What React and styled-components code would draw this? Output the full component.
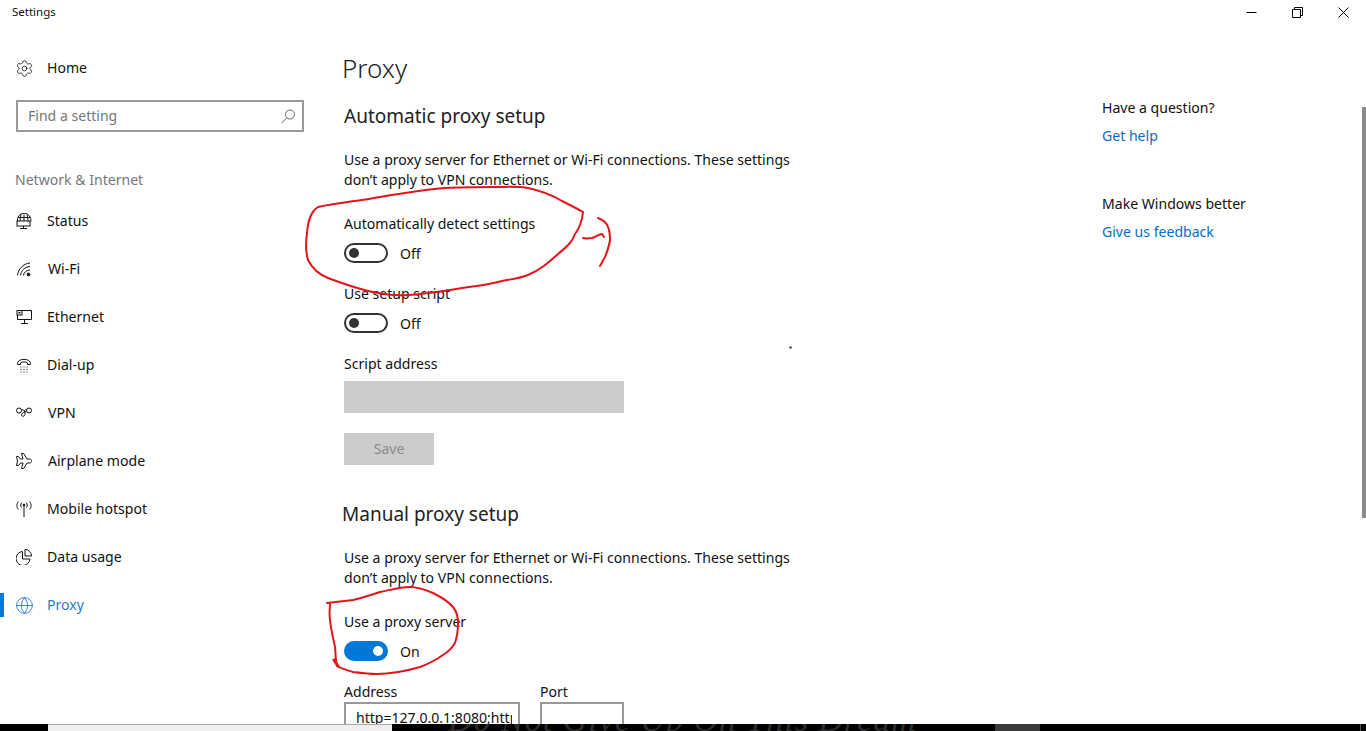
import React from "react";
import styled, { createGlobalStyle } from "styled-components";
import { Settings, Globe } from "lucide-react";

const GlobalStyle = createGlobalStyle`
  html, body {
    margin: 0;
    padding: 0;
    background: #fff;
    overflow: hidden;
  }
  * { box-sizing: border-box; }
`;

const Page = styled.div`
  position: relative;
  width: 1366px;
  height: 731px;
  display: flex;
  flex-direction: column;
  overflow: hidden;
  background: #fff;
  color: #111;
  font-family: "Noto Sans", "Open Sans", sans-serif;
  font-size: 14.07px;
  line-height: 20px;
`;

const TitleBar = styled.div`
  height: 24px;
  flex: none;
  display: flex;
  align-items: center;
  justify-content: space-between;
  padding-left: 12px;
  font-size: 11.5px;
`;

const WindowButtons = styled.div`
  display: flex;
`;

const WindowButton = styled.div`
  width: 46px;
  height: 24px;
  display: flex;
  align-items: center;
  justify-content: center;
`;

const Body = styled.div`
  flex: 1;
  min-height: 0;
  display: flex;
  overflow: hidden;
`;

const Sidebar = styled.nav`
  width: 320px;
  flex: none;
  padding-top: 20px;
`;

const NavRow = styled.div`
  position: relative;
  height: 48px;
  display: flex;
  align-items: center;
  gap: ${(p) => (p.$wide ? 16 : 15)}px;
  padding-left: 16px;
  color: ${(p) => (p.$active ? "#2b7cc4" : "#111")};
  &::before {
    content: "";
    display: ${(p) => (p.$active ? "block" : "none")};
    position: absolute;
    left: 0;
    top: 12px;
    width: 4px;
    height: 24px;
    background: #0078d7;
  }
`;

const IconBox = styled.span`
  width: 16px;
  height: 16px;
  flex: none;
  display: flex;
  align-items: center;
  justify-content: center;
`;

const SearchBox = styled.div`
  width: 288px;
  height: 32px;
  margin: 8px 0 0 16px;
  padding: 0 6px 0 10px;
  display: flex;
  align-items: center;
  justify-content: space-between;
  border: 2px solid #999;
  color: #777;
`;

const GroupLabel = styled.div`
  margin: 38px 0 7px 15px;
  color: #777;
`;

const Main = styled.main`
  flex: 1;
  padding: 24px 0 0 24px;
`;

const PageTitle = styled.h1`
  margin: 0 0 0 -2px;
  font-size: 26px;
  font-weight: 300;
  line-height: 40px;
  color: #222;
`;

const SectionTitle = styled.h2`
  margin: ${(p) => p.$top}px 0 0 ${(p) => p.$left || 0}px;
  font-size: 19px;
  font-weight: 400;
  line-height: 28px;
  color: #222;
`;

const Paragraph = styled.p`
  margin: 20px 0 0;
  width: 470px;
`;

const FieldLabel = styled.div`
  margin-top: ${(p) => p.$top}px;
`;

const ToggleRow = styled.div`
  margin-top: 9px;
  height: 20px;
  display: flex;
  align-items: center;
  gap: 12px;
`;

const ToggleText = styled.span`
  padding-top: 1px;
`;

const Toggle = styled.span`
  width: 44px;
  height: 20px;
  display: flex;
  align-items: center;
  justify-content: ${(p) => (p.$on ? "flex-end" : "flex-start")};
  padding: 0 3px;
  border-radius: 10px;
  border: 2px solid ${(p) => (p.$on ? "#0078d7" : "#333")};
  background: ${(p) => (p.$on ? "#0078d7" : "#fff")};
  &::after {
    content: "";
    width: 10px;
    height: 10px;
    border-radius: 50%;
    background: ${(p) => (p.$on ? "#fff" : "#333")};
  }
`;

const DisabledInput = styled.div`
  width: 280px;
  height: 32px;
  margin-top: 7px;
  background: #ccc;
`;

const DisabledButton = styled.div`
  width: 90px;
  height: 32px;
  margin-top: 20px;
  display: flex;
  align-items: center;
  justify-content: center;
  background: #ccc;
  color: #8a8a8a;
`;

const AddressRow = styled.div`
  display: flex;
  gap: 20px;
  margin-top: 21px;
`;

const AddressField = styled.div`
  width: ${(p) => p.$width}px;
  flex: none;
`;

const TextBox = styled.input`
  display: block;
  width: 100%;
  height: 32px;
  padding: 0 6px 2px 10px;
  border: 2px solid #999;
  border-radius: 0;
  outline: none;
  background: #fff;
  color: #111;
  font: inherit;
`;

const Aside = styled.aside`
  width: 264px;
  flex: none;
  padding-top: 74px;
`;

const AsideText = styled.div`
  margin-top: ${(p) => p.$top || 0}px;
`;

const AsideLink = styled.a`
  display: block;
  margin-top: 8px;
  color: #0b6cbd;
`;

const ScrollThumb = styled.div`
  position: absolute;
  right: 0;
  top: 107px;
  width: 4px;
  height: 411px;
  background: #8a8a8a;
`;

const Taskbar = styled.div`
  height: 7px;
  flex: none;
  display: flex;
  background: #000;
  overflow: hidden;
`;

const TaskbarStart = styled.div`
  width: 48px;
  flex: none;
`;

const TaskbarSearch = styled.div`
  width: 344px;
  flex: none;
  background: #f0f0f0;
  border-top: 1px solid #aaa;
`;

const TaskbarWallpaper = styled.div`
  width: 603px;
  flex: none;
  padding-left: 56px;
  color: #2c2c2c;
  font-family: "Liberation Serif", serif;
  font-style: italic;
  font-size: 34px;
  line-height: 30px;
  letter-spacing: 1px;
  white-space: nowrap;
  overflow: hidden;
  & > span {
    display: block;
    margin-top: -19px;
  }
`;

const TaskbarActive = styled.div`
  width: 45px;
  flex: none;
  background: #3a3a3a;
`;

const TaskbarClock = styled.div`
  margin-left: 225px;
  width: 96px;
  flex: none;
  border-right: 1px solid #555;
  color: #fff;
  font-size: 11.5px;
  line-height: 16px;
  & > span {
    display: block;
    margin-top: 4px;
  }
`;

const Annotations = styled.svg`
  position: absolute;
  left: 0;
  top: 0;
  width: 1366px;
  height: 731px;
  pointer-events: none;
`;

const line = { fill: "none", stroke: "#111", strokeWidth: 1 };

const StatusIcon = () => (
  <svg width="16" height="16" viewBox="0 0 16 16" {...line}>
    <path d="M1.500 8.500A6.800 6.800 0 1 1 14.800 8.500" />
    <path d="M2 4.500h12M8 1.500v7M5 2c-.8 2-1 4-1 6.500M11 2c.8 2 1 4 1 6.500" />
    <rect x="1" y="8" width="13" height="5" fill="#fff" />
    <path d="M7.500 13v2M4 15.500h7" />
  </svg>
);

const WifiIcon = () => (
  <svg width="16" height="16" viewBox="0 0 16 16" {...line}>
    <path d="M1.500 14.500C2 8.500 7 2.500 14 2" />
    <path d="M4.500 14.500c.4-4.500 4-8.500 9.500-9" />
    <path d="M7.500 14.500c.3-3 2.600-5.200 6.500-5.500" />
    <circle cx="12.500" cy="13.500" r="1.400" fill="#111" />
  </svg>
);

const EthernetIcon = () => (
  <svg width="16" height="16" viewBox="0 0 16 16" {...line}>
    <path d="M5.500 1.500h10v9h-14V6" />
    <rect x="1" y="1.500" width="5" height="4.500" />
    <rect x="2.500" y="3" width="2" height="1.500" fill="#111" stroke="none" />
    <path d="M8.500 10.500v4M5 14.500h7" />
  </svg>
);

const DialIcon = () => (
  <svg width="16" height="16" viewBox="0 0 16 16" {...line}>
    <path d="M1.500 6.500C1.500 1 14.500 1 14.500 6.500v1h-3V6C10 4.500 6 4.500 4.500 6v1.500h-3z" />
    <path d="M4.500 10h1M7.500 10h1M10.500 10h1M4.500 12.500h1M7.500 12.500h1M10.500 12.500h1M4.500 15h1M7.500 15h1M10.500 15h1" />
  </svg>
);

const VpnIcon = () => (
  <svg width="16" height="16" viewBox="0 0 16 16" {...line}>
    <circle cx="3" cy="5.500" r="2.500" />
    <circle cx="13" cy="5.500" r="2.500" />
    <path d="M5.300 4.500C8 4.500 9.500 7 9 9.500c-.4 2-3.500 2.500-3.500.5S8.500 7 10.800 6.500" />
    <path d="M10.700 4.500C9.500 4.500 8.800 5 8.300 5.800" />
  </svg>
);

const PlaneIcon = () => (
  <svg width="16" height="16" viewBox="0 0 16 16" {...line}>
    <path d="M.5 3.500h2L4.500 6H7L5.500.5h2.200L11 6h2.500c1.500 0 2.300 1.200 2.300 2s-.8 2-2.300 2H11l-3.300 5.500H5.500L7 10H4.500l-2 2.500h-2L1.500 8z" />
  </svg>
);

const HotspotIcon = () => (
  <svg width="16" height="16" viewBox="0 0 16 16" {...line}>
    <path d="M8 5v11" />
    <circle cx="8" cy="4" r=".9" fill="#111" />
    <path d="M5.500 1.500c-1 1.500-1 3.500 0 5M10.500 1.500c1 1.500 1 3.500 0 5M2.500.5c-2.200 2.500-2.200 5.500 0 8M13.500.5c2.200 2.500 2.200 5.500 0 8" />
  </svg>
);

const DataIcon = () => (
  <svg width="16" height="16" viewBox="0 0 16 16" {...line}>
    <path d="M6.500 2.500a7 7 0 1 0 7.500 7.500H6.500z" />
    <path d="M9 .5a6.500 6.500 0 0 1 6.500 6.500H9z" />
  </svg>
);

const MinimizeGlyph = () => (
  <svg width="11" height="11" viewBox="0 0 11 11" fill="none" stroke="#000">
    <path d="M.5 5.500h10" />
  </svg>
);

const RestoreGlyph = () => (
  <svg width="11" height="11" viewBox="0 0 11 11" fill="none" stroke="#000">
    <path d="M.5 2.500h8v8h-8zM2.500 2.500v-2h8v8h-2" />
  </svg>
);

const CloseGlyph = () => (
  <svg width="11" height="11" viewBox="0 0 11 11" fill="none" stroke="#000">
    <path d="M.5.500l10 10M10.500.500l-10 10" />
  </svg>
);

const SearchGlyph = () => (
  <svg width="15" height="15" viewBox="0 0 15 15" fill="none" stroke="#666">
    <circle cx="9" cy="5.500" r="4.500" />
    <path d="M5.800 8.700L.8 14" />
  </svg>
);

const navItems = [
  { label: "Status", icon: <StatusIcon /> },
  { label: "Wi-Fi", icon: <WifiIcon />, wide: true },
  { label: "Ethernet", icon: <EthernetIcon /> },
  { label: "Dial-up", icon: <DialIcon /> },
  { label: "VPN", icon: <VpnIcon />, wide: true },
  { label: "Airplane mode", icon: <PlaneIcon />, wide: true },
  { label: "Mobile hotspot", icon: <HotspotIcon /> },
  { label: "Data usage", icon: <DataIcon /> },
];

const proxyText = (
  <>
    Use a proxy server for Ethernet or Wi-Fi connections. These settings
    <br />
    don’t apply to VPN connections.
  </>
);

export default function App() {
  return (
    <Page>
      <GlobalStyle />
      <TitleBar>
        <span>Settings</span>
        <WindowButtons>
          <WindowButton>
            <MinimizeGlyph />
          </WindowButton>
          <WindowButton>
            <RestoreGlyph />
          </WindowButton>
          <WindowButton>
            <CloseGlyph />
          </WindowButton>
        </WindowButtons>
      </TitleBar>
      <Body>
        <Sidebar>
          <NavRow>
            <IconBox>
              <Settings size={19} strokeWidth={1} style={{ flex: "none" }} />
            </IconBox>
            Home
          </NavRow>
          <SearchBox>
            Find a setting
            <SearchGlyph />
          </SearchBox>
          <GroupLabel>Network &amp; Internet</GroupLabel>
          {navItems.map((item) => (
            <NavRow key={item.label} $wide={item.wide}>
              <IconBox>{item.icon}</IconBox>
              {item.label}
            </NavRow>
          ))}
          <NavRow $active>
            <IconBox>
              <Globe size={19} strokeWidth={1.100} color="#1f78c8" style={{ flex: "none" }} />
            </IconBox>
            Proxy
          </NavRow>
        </Sidebar>
        <Main>
          <PageTitle>Proxy</PageTitle>
          <SectionTitle $top={14}>Automatic proxy setup</SectionTitle>
          <Paragraph>{proxyText}</Paragraph>
          <FieldLabel $top={24}>Automatically detect settings</FieldLabel>
          <ToggleRow>
            <Toggle />
            <ToggleText>Off</ToggleText>
          </ToggleRow>
          <FieldLabel $top={21}>Use setup script</FieldLabel>
          <ToggleRow>
            <Toggle />
            <ToggleText>Off</ToggleText>
          </ToggleRow>
          <FieldLabel $top={21}>Script address</FieldLabel>
          <DisabledInput />
          <DisabledButton>Save</DisabledButton>
          <SectionTitle $top={35} $left={-2}>
            Manual proxy setup
          </SectionTitle>
          <Paragraph>{proxyText}</Paragraph>
          <FieldLabel $top={24}>Use a proxy server</FieldLabel>
          <ToggleRow>
            <Toggle $on />
            <ToggleText>On</ToggleText>
          </ToggleRow>
          <AddressRow>
            <AddressField $width={176}>
              Address
              <TextBox readOnly value="http=127.0.0.1:8080;https=127.0.0.1:8080" />
            </AddressField>
            <AddressField $width={84}>
              Port
              <TextBox readOnly value="" />
            </AddressField>
          </AddressRow>
        </Main>
        <Aside>
          <AsideText>Have a question?</AsideText>
          <AsideLink>Get help</AsideLink>
          <AsideText $top={48}>Make Windows better</AsideText>
          <AsideLink>Give us feedback</AsideLink>
        </Aside>
      </Body>
      <Taskbar>
        <TaskbarStart />
        <TaskbarSearch />
        <TaskbarWallpaper>
          <span>Do Not Give Up On This Dream</span>
        </TaskbarWallpaper>
        <TaskbarActive />
        <TaskbarClock>
          <span>12:22</span>
        </TaskbarClock>
      </Taskbar>
      <ScrollThumb />
      <Annotations viewBox="0 0 1366 731" fill="none" stroke="#e3141c" strokeWidth="2" strokeLinecap="round" strokeLinejoin="round">
        <path d="M583 212C582 222 578 230 575 234C572 243 565 248 558 254C548 263 540 270 528 275C518 279 510 279 502 281C488 285 476 286 462 288C444 291 426 294 408 295C396 296 388 295 378 293C360 290 344 284 328 278C318 274 312 268 308 260C305 250 306 240 307 233C308 222 310 212 318 207C332 204 348 202 362 200C376 198 390 195 405 193C418 191 432 189 445 188C462 187 478 187 495 187C506 187 518 186 528 188C542 191 552 195 562 201C570 205 576 208 583 212" />
        <path d="M598 218C603 220 607 223 608 227C610 232 610 236 610 240C609 247 607 252 605 257C603 260 602 263 600 266" />
        <path d="M583 238C586 239 589 238 592 238C596 237 599 234 602 234L604 237" />
        <path d="M327 603L353 600C362 598 371 595 380 592C390 590 400 587 410 587C419 587 426 590 433 593C441 597 448 601 453 607C457 612 458 617 458 623C458 630 457 637 455 643C452 648 448 652 443 655C436 660 428 664 420 667C406 671 391 674 377 674C369 674 361 673 353 672C347 670 342 669 337 666C335 660 336 653 335 647C333 638 331 629 330 620C329 614 330 608 330 603" />
        <path d="M334 660L338 666" strokeWidth="3" />
        <path d="M790 347.500h1" stroke="#7a2a50" />
      </Annotations>
    </Page>
  );
}
